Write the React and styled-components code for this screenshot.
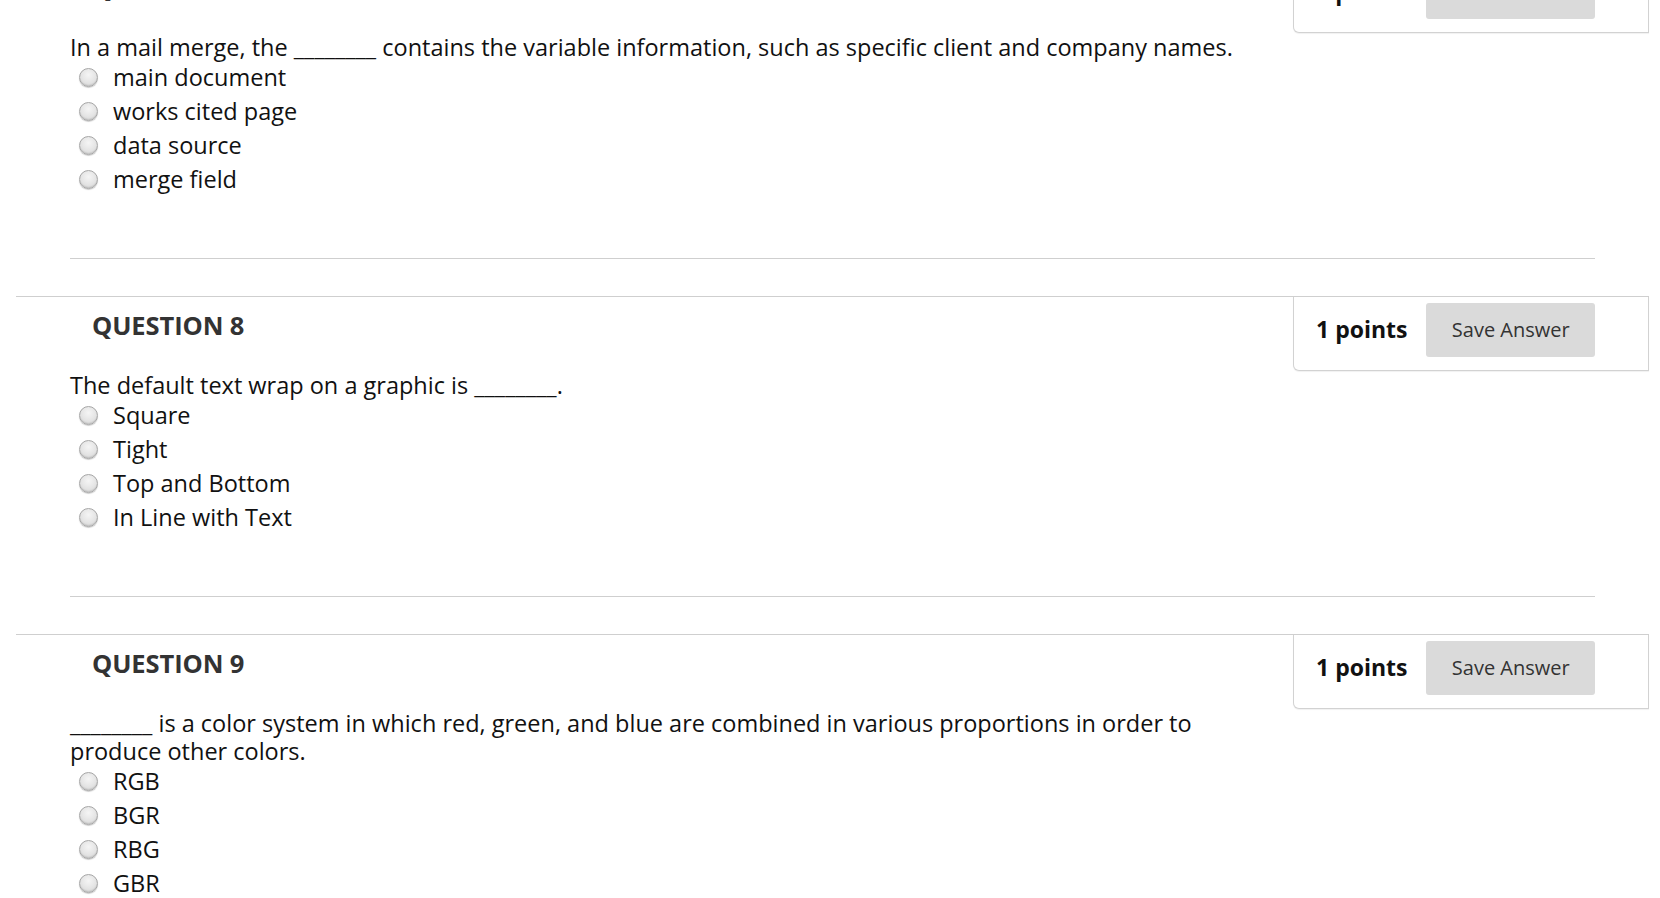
import React from "react";
import styled, { createGlobalStyle } from "styled-components";

const GlobalStyle = createGlobalStyle`
  html, body {
    margin: 0;
    padding: 0;
    background: #ffffff;
    overflow: hidden;
  }
  body {
    font-family: "Open Sans", "Liberation Sans", sans-serif;
    color: #111111;
  }
`;

const Page = styled.main`
  margin: -42px 11px 0 16px;
`;

const QuestionBlock = styled.section`
  border-top: 1px solid #cfcfcf;
`;

const Header = styled.div`
  display: flex;
  justify-content: space-between;
  align-items: flex-start;
  height: 74px;
`;

const Title = styled.h2`
  margin: 0;
  padding: 12px 0 0 76px;
  font-family: "Open Sans", "Liberation Sans", sans-serif;
  font-weight: 700;
  font-size: 25.5px;
  line-height: 32px;
  color: #333333;
  letter-spacing: -0.1px;
`;

const PointsBox = styled.div`
  display: flex;
  align-items: center;
  gap: 19px;
  width: 356px;
  box-sizing: border-box;
  padding: 6px 53px 13px 22px;
  border: 1px solid #d2d2d2;
  border-top: none;
  border-bottom-left-radius: 6px;
  box-shadow: 0 1px 1px rgba(0, 0, 0, 0.06);
  background: #ffffff;
`;

const Points = styled.span`
  font-weight: 700;
  font-size: 23px;
  color: #111111;
  white-space: nowrap;
  padding-bottom: 3px;
`;

const SaveButton = styled.button`
  width: 170px;
  height: 54px;
  border: none;
  border-radius: 3px;
  background: #dadada;
  color: #333333;
  font-family: "Open Sans", "Liberation Sans", sans-serif;
  font-size: 20px;
  padding: 0 0 1px;
  cursor: pointer;
`;

const Body = styled.div`
  padding-left: 54px;
`;

const Prompt = styled.p`
  margin: 0;
  max-width: 1185px;
  font-size: 23.5px;
  line-height: 28px;
  color: #111111;
`;

const Options = styled.ul`
  list-style: none;
  margin: -1px 0 0;
  padding: 0;
`;

const Option = styled.li`
  display: flex;
  align-items: center;
  height: 34px;
  font-size: 23.5px;
  color: #111111;
`;

const Radio = styled.span`
  flex: none;
  width: 17px;
  height: 17px;
  margin-left: 9px;
  margin-right: 15px;
  border-radius: 50%;
  border: 1px solid #a6a6a6;
  background: radial-gradient(circle at 50% 35%, #f5f5f5 0%, #e4e4e4 55%, #cfcfcf 100%);
  box-shadow: 0 1px 1px rgba(0, 0, 0, 0.2), inset 0 -1px 1px rgba(0, 0, 0, 0.1);
`;

const Divider = styled.hr`
  margin: 62px 54px 37px 54px;
  border: none;
  border-top: 1px solid #cfcfcf;
  height: 0;
`;

const questions = [
  {
    n: 7,
    prompt:
      "In a mail merge, the ________ contains the variable information, such as specific client and company names.",
    options: ["main document", "works cited page", "data source", "merge field"],
  },
  {
    n: 8,
    prompt: "The default text wrap on a graphic is ________.",
    options: ["Square", "Tight", "Top and Bottom", "In Line with Text"],
  },
  {
    n: 9,
    prompt:
      "________ is a color system in which red, green, and blue are combined in various proportions in order to produce other colors.",
    options: ["RGB", "BGR", "RBG", "GBR"],
  },
];

export default function App() {
  return (
    <>
      <GlobalStyle />
      <Page>
        {questions.map((q) => (
          <QuestionBlock key={q.n}>
            <Header>
              <Title>QUESTION {q.n}</Title>
              <PointsBox>
                <Points>1 points</Points>
                <SaveButton type="button">Save Answer</SaveButton>
              </PointsBox>
            </Header>
            <Body>
              <Prompt>{q.prompt}</Prompt>
              <Options>
                {q.options.map((o) => (
                  <Option key={o}>
                    <Radio />
                    {o}
                  </Option>
                ))}
              </Options>
            </Body>
            <Divider />
          </QuestionBlock>
        ))}
      </Page>
    </>
  );
}
